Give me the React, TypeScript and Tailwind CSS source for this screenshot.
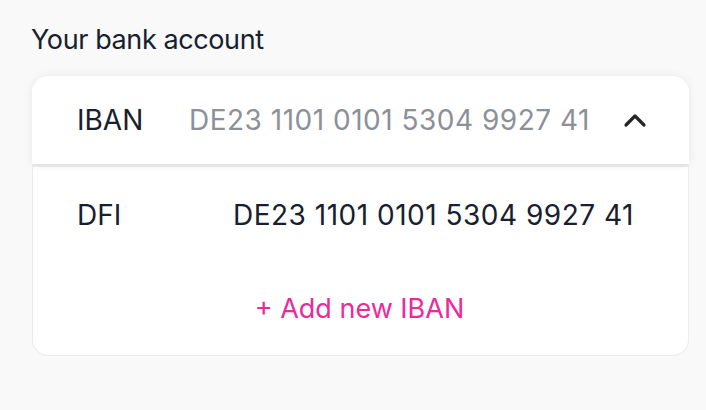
import React from "react";

export default function App() {
  return (
    <div
      className="w-[706px] h-[410px] bg-[#f9f9f9] pt-[21px] pl-[32px] pr-[17px]"
      style={{ fontFamily: "Inter, 'Noto Sans', sans-serif" }}
    >
      <div className="text-[27px] leading-[38px] text-[#18202f] -ml-[1px] tracking-[-0.4px]">Your bank account</div>
      <div className="mt-[17px] w-[657px]">
        <div className="h-[88px] bg-white rounded-t-[16px] shadow-[0_0_10px_rgba(0,0,0,0.08)] flex items-center pl-[45px] pr-[42px] relative z-10">
          <span className="text-[28px] text-[#18202f] w-[112px]">IBAN</span>
          <span className="text-[28px] tracking-[0.5px] text-[#8b9099] flex-1">DE23 1101 0101 5304 9927 41</span>
          <svg width="24" height="16" viewBox="0 0 24 16" fill="none">
            <path d="M3 13 L12 4 L21 13" stroke="#262626" strokeWidth="3.2" strokeLinecap="round" strokeLinejoin="round" />
          </svg>
        </div>
        <div className="h-[3px] bg-[#ececec]" />
        <div className="h-[189px] bg-white rounded-b-[16px] border border-t-0 border-[#ececec] flex flex-col">
          <div className="h-[96px] flex items-center pl-[44px]">
            <span className="text-[28px] text-[#18202f] w-[156px]">DFI</span>
            <span className="text-[28px] tracking-[0.5px] text-[#18202f]">DE23 1101 0101 5304 9927 41</span>
          </div>
          <div className="flex justify-center pt-[26px]">
            <span className="text-[27px] text-[#ec2a9b] -ml-[2px]">+ Add new IBAN</span>
          </div>
        </div>
      </div>
    </div>
  );
}
